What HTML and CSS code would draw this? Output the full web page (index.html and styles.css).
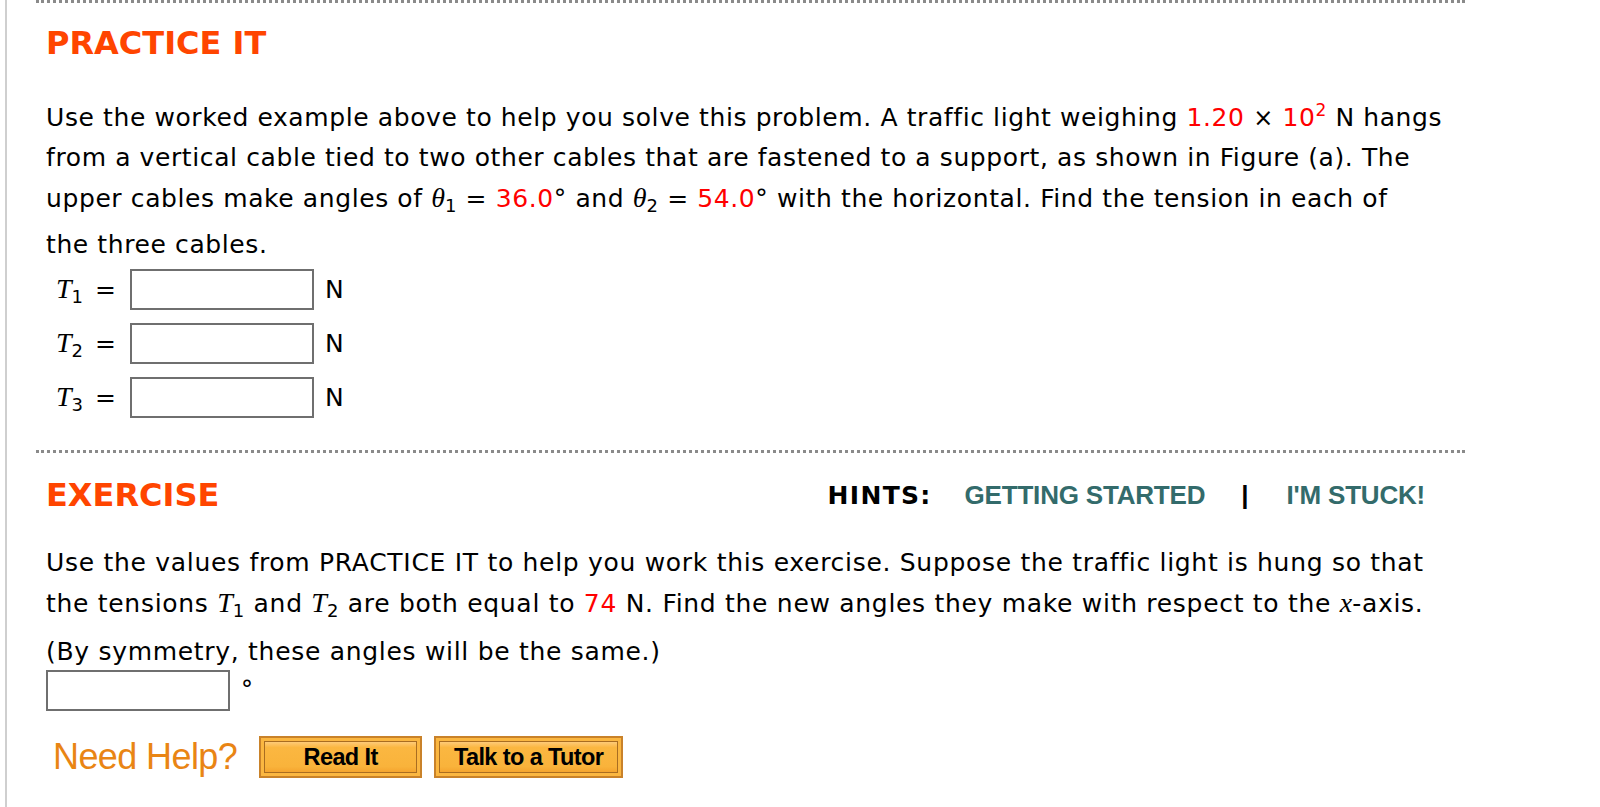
FILE: index.html
```html
<!DOCTYPE html>
<html lang="en">
<head>
  <meta charset="UTF-8">
  <title>Practice It</title>
  <link rel="stylesheet" href="styles.css">
</head>
<body>
  <div class="page">
    <div class="section practice">
      <h2 class="title">PRACTICE IT</h2>
      <p class="text">
        Use the worked example above to help you solve this problem. A traffic light weighing
        <span class="red">1.20</span> <span class="times">&times;</span> <span class="red">10<sup>2</sup></span> N hangs<br>
        from a vertical cable tied to two other cables that are fastened to a support, as shown in Figure (a). The<br>
        upper cables make angles of <span class="var">&theta;</span><sub>1</sub> = <span class="red">36.0</span>&deg; and
        <span class="var">&theta;</span><sub>2</sub> = <span class="red">54.0</span>&deg; with the horizontal. Find the tension in each of
        <span class="last">the three cables.</span>
      </p>
      <div class="answers">
        <div class="answer">
          <span class="label"><span class="var">T</span><sub>1</sub><span class="eq">=</span></span>
          <input class="box" type="text">
          <span class="unit">N</span>
        </div>
        <div class="answer">
          <span class="label"><span class="var">T</span><sub>2</sub><span class="eq">=</span></span>
          <input class="box" type="text">
          <span class="unit">N</span>
        </div>
        <div class="answer">
          <span class="label"><span class="var">T</span><sub>3</sub><span class="eq">=</span></span>
          <input class="box" type="text">
          <span class="unit">N</span>
        </div>
      </div>
    </div>
    <div class="section exercise">
      <div class="head">
        <h2 class="title">EXERCISE</h2>
        <div class="hints">
          <span class="hints-label">HINTS:</span>
          <a href="#" class="hint">GETTING STARTED</a>
          <span class="sep">|</span>
          <a href="#" class="hint">I'M STUCK!</a>
        </div>
      </div>
      <p class="text">
        Use the values from PRACTICE IT to help you work this exercise. Suppose the traffic light is hung so that<br>
        the tensions <span class="var">T</span><sub>1</sub> and <span class="var">T</span><sub>2</sub> are both equal to <span class="red">74</span> N. Find the new angles they make with respect to the <span class="var">x</span>-axis.
        <span class="last">(By symmetry, these angles will be the same.)</span>
      </p>
      <div class="answer single">
        <input class="box" type="text">
        <span class="deg">&deg;</span>
      </div>
      <div class="help">
        <span class="need">Need Help?</span>
        <button class="btn read">Read It</button>
        <button class="btn tutor">Talk to a Tutor</button>
      </div>
    </div>
  </div>
</body>
</html>
```

FILE: styles.css
```css
* { box-sizing: border-box; }
body {
  margin: 0;
  background: #fff;
  font-family: "DejaVu Sans", Verdana, sans-serif;
  color: #000;
}
.page {
  margin-left: 5px;
  border-left: 2px solid #cfcfcf;
  min-height: 807px;
  padding-left: 29px;
  width: 1460px;
}
.section {
  border-top: 3px dotted #8a8a8a;
  padding-left: 10px;
  padding-right: 10px;
}
.title {
  margin: 0;
  font-size: 32px;
  line-height: 38px;
  font-weight: bold;
  color: #ff4500;
}
.practice .title {
  padding-top: 21px;
}
.text {
  margin: 0;
  font-size: 25px;
  letter-spacing: 0.6px;
  line-height: 40px;
  white-space: nowrap;
}
.practice .text {
  margin-top: 36px;
}
.exercise .text {
  margin-top: 29px;
  letter-spacing: 0.7px;
}
.last {
  display: block;
  margin-top: 6px;
}
.red { color: #ff0000; }
.times { font-size: 24px; }
sup {
  font-size: 17px;
  vertical-align: 10px;
  line-height: 0;
}
sub {
  font-size: 18px;
  vertical-align: -5px;
  line-height: 0;
}
.var {
  font-family: "Liberation Serif", "Times New Roman", serif;
  font-style: italic;
  font-size: 28px;
  letter-spacing: 0;
}
.answers {
  margin-top: -3px;
}
.answer {
  display: flex;
  align-items: center;
  height: 54px;
}
.label {
  width: 84px;
  padding-left: 10px;
  font-size: 25px;
  white-space: nowrap;
}
.eq {
  margin-left: 12px;
}
.box {
  width: 184px;
  height: 41px;
  border: 2px solid #6f6f6f;
  background: #fff;
  margin: 0;
}
.unit {
  margin-left: 11px;
  font-size: 25px;
}
.exercise {
  margin-top: 26px;
}
.head {
  display: flex;
  align-items: center;
  justify-content: space-between;
  padding-top: 23px;
}
.hints {
  display: flex;
  align-items: center;
  font-family: "Liberation Sans", Arial, sans-serif;
  font-weight: bold;
  font-size: 26px;
  margin-right: 30px;
}
.hints-label {
  font-family: "DejaVu Sans", Verdana, sans-serif;
  font-size: 25px;
  letter-spacing: 1.3px;
  margin-right: 33px;
}
.hint {
  color: #336b6b;
  text-decoration: none;
  letter-spacing: -0.2px;
}
.sep {
  margin: 0 38px 0 36px;
}
.exercise .last {
  margin-top: 8px;
}
.answer.single {
  height: auto;
  margin-top: -2px;
}
.deg {
  margin-left: 11px;
  font-size: 24px;
  align-self: flex-start;
  margin-top: 6px;
}
.help {
  display: flex;
  align-items: center;
  margin-top: 25px;
  padding-left: 7px;
}
.need {
  font-family: "Liberation Sans", Arial, sans-serif;
  font-size: 36px;
  color: #e98514;
  letter-spacing: -0.6px;
  margin-right: 22px;
}
.btn {
  height: 42px;
  padding: 0;
  margin-right: 12px;
  font-family: "Liberation Sans", Arial, sans-serif;
  font-weight: bold;
  font-size: 23.5px;
  letter-spacing: -0.6px;
  color: #000;
  background: linear-gradient(#ffd9a0, #fbb741 25%, #f9b33b 75%, #f29a26);
  border: 2px solid #c9822a;
  box-shadow: inset 0 0 0 3px #fbb741, inset 0 0 0 4px #a96d21;
  cursor: pointer;
}
.read { width: 163px; }
.tutor { width: 189px; }
```
